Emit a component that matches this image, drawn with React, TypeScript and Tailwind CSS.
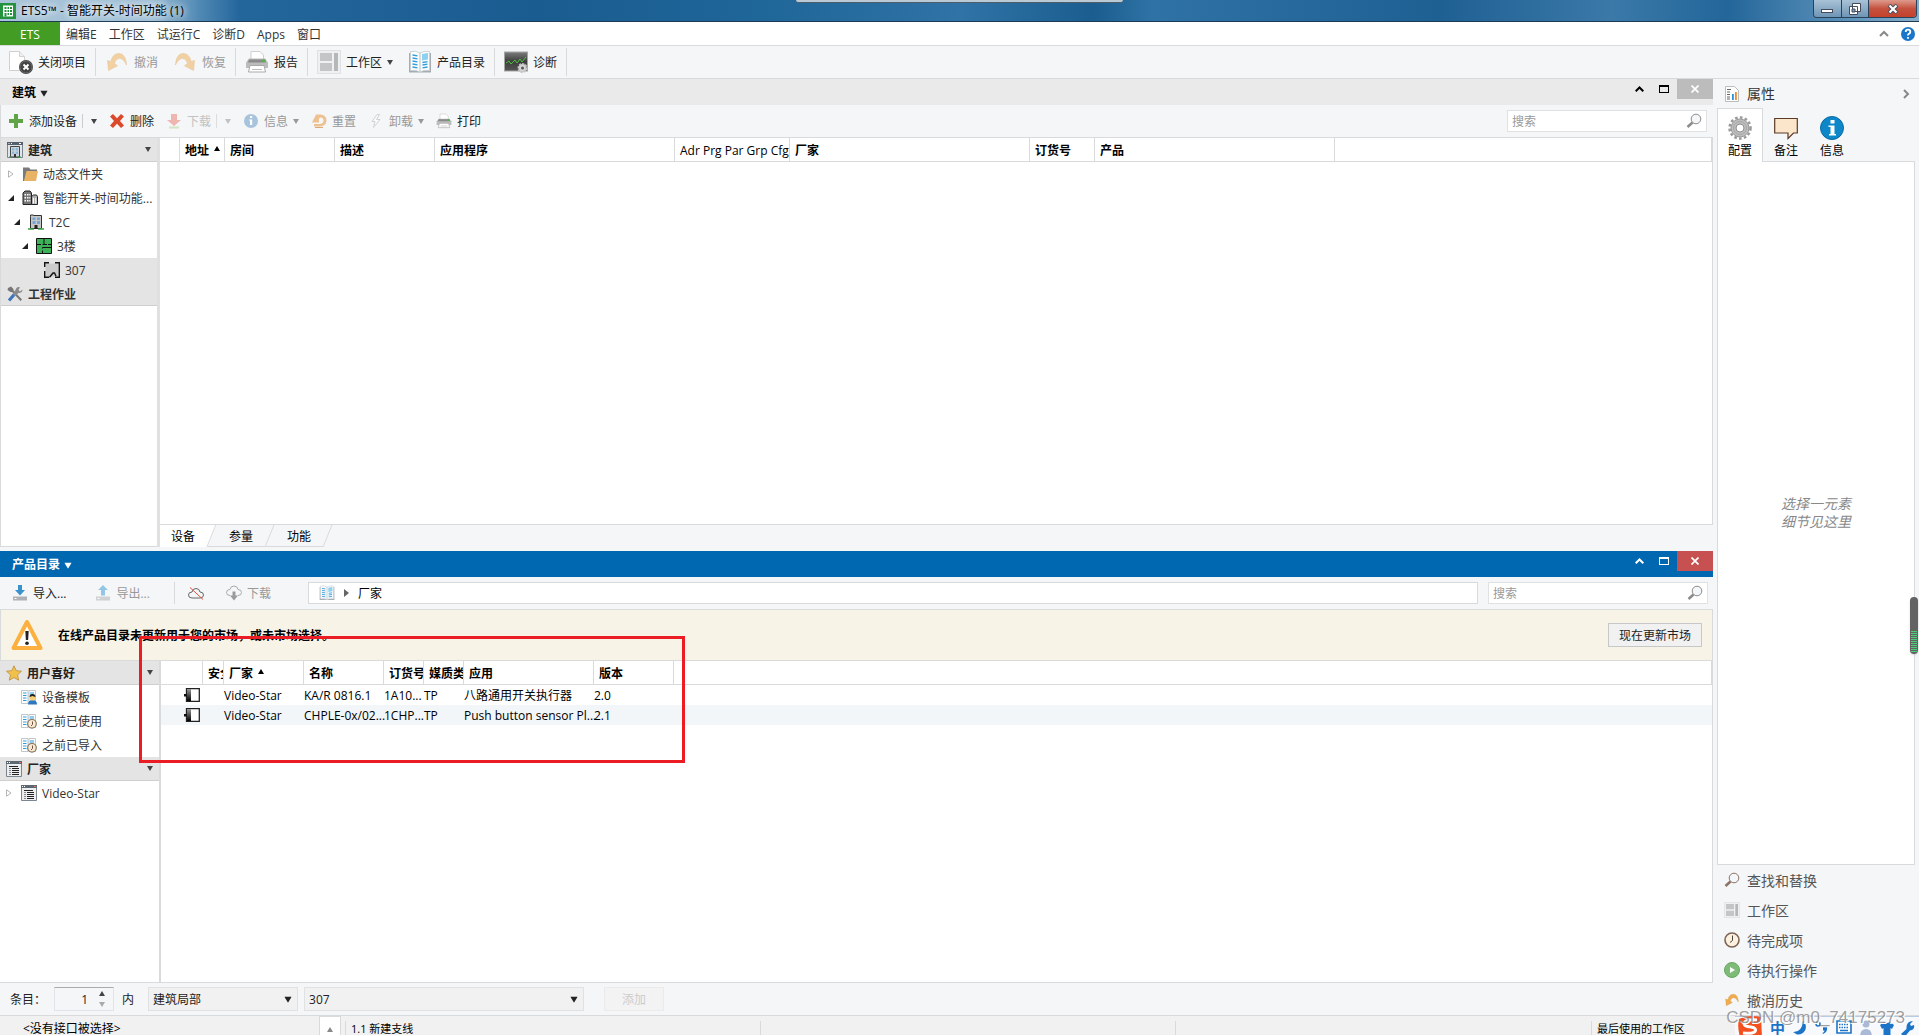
import type { ReactNode } from "react";

const font = "font-['Open_Sans','Noto_Sans_CJK_SC',sans-serif]";

/* ---------- small shared glyphs ---------- */

function Down({ className = "text-[#444]" }: { className?: string }) {
  return (
    <svg className={`h-[5px] w-[6px] shrink-0 ${className}`} viewBox="0 0 6 5" fill="currentColor">
      <path d="M0 0h6L3 5z" />
    </svg>
  );
}

function Up({ className = "text-[#444]" }: { className?: string }) {
  return (
    <svg className={`h-[5px] w-[6px] shrink-0 ${className}`} viewBox="0 0 6 5" fill="currentColor">
      <path d="M0 5h6L3 0z" />
    </svg>
  );
}

function Expander({ open }: { open?: boolean }) {
  return open ? (
    <svg className="h-[6px] w-[6px]" viewBox="0 0 6 6">
      <path d="M6 0v6H0z" fill="#222" />
    </svg>
  ) : (
    <svg className="h-[8px] w-[6px]" viewBox="0 0 6 8">
      <path d="M.5.8v6.4L5 4z" fill="#fff" stroke="#b5b5b5" />
    </svg>
  );
}

/* ---------- main toolbar icons (24px) ---------- */

function CloseProjectIcon() {
  return (
    <svg width="24" height="24" viewBox="0 0 24 24">
      <path d="M.5 1.500h10l5 5v14H.5z" fill="#fff" stroke="#d0d0d0" />
      <path d="M10.500 1.500v5h5" fill="#eee" stroke="#d0d0d0" />
      <circle cx="17" cy="17" r="7" fill="#444" />
      <circle cx="17" cy="17" r="6" fill="none" stroke="#6a6a6a" />
      <path d="M14.500 14.500l5 5M19.500 14.500l-5 5" stroke="#fff" strokeWidth="2" />
    </svg>
  );
}

function ArrowBack({ size = 24, flip, faded }: { size?: number; flip?: boolean; faded?: boolean }) {
  return (
    <svg
      width={size}
      height={size}
      viewBox="0 0 24 24"
      className={`${flip ? "-scale-x-100" : ""} ${faded ? "opacity-50" : ""}`}
    >
      <path
        d="M21.500 15C21 8 18.500 3.500 14 3.500C9.500 3.500 6.800 7 6 11.500L2.500 10.500L3.500 20.500L12.500 15.800L9.500 13.500C10.200 10.500 12 8.500 14.500 8.500C17.500 8.500 19.500 11 21.500 15Z"
        fill="#f0ab4e"
        stroke="#dc9a44"
        strokeWidth=".6"
      />
    </svg>
  );
}

function PrinterIcon({ size = 24 }: { size?: number }) {
  return (
    <svg width={size} height={size} viewBox="0 0 24 24">
      <path d="M6 10V1.500h9l3.500 3.500v5z" fill="#fff" stroke="#cfcfcf" />
      <path d="M4 8.500h16l3 4v5.500H1v-5.500z" fill="#bcbcbc" />
      <path d="M4 9.500h16l1 3H3z" fill="#8a8a8a" />
      <rect x="17.500" y="9.500" width="3" height="2.500" fill="#4fb848" />
      <path d="M5 15.500h14l1.500 6.500h-17z" fill="#fff" stroke="#a9a9a9" />
      <path d="M7 19.500h10" stroke="#bbb" />
    </svg>
  );
}

function WorkspaceIcon({ size = 24 }: { size?: number }) {
  return (
    <svg width={size} height={size} viewBox="0 0 24 24">
      <rect x=".5" y=".5" width="23" height="23" fill="#eff0f1" stroke="#e0e1e2" />
      <path d="M3 3h12v8H3zM3 13h12v8H3z" fill="#c3c5c6" />
      <path d="M17 3h4v18h-4z" fill="#b5b7b8" />
    </svg>
  );
}

function BookIcon({ size = 24 }: { size?: number }) {
  return (
    <svg width={size} height={size} viewBox="0 0 24 24">
      <path d="M1 22.500V3h1.500v17.500h19V3H23v19.500z" fill="#a5adb2" />
      <path d="M2.500 1.500Q8 .5 12 3Q16 .5 21.500 1.500V20.500Q16 19.500 12 22Q8 19.500 2.500 20.500z" fill="#fbfcfd" stroke="#c2c9cd" strokeWidth=".8" />
      <path d="M12 3v18.500" stroke="#b5bdc2" />
      <path d="M4.500 5l5 .8M4.500 8l5 .8M4.500 11l5 .8M4.500 14l5 .8M4.500 17l5 .8M14.500 12.500l5-.8M14.500 15l5-.8M14.500 17.800l5-.8" stroke="#2f9ed8" strokeWidth="1.300" />
      <path d="M14 4l6-1v6.500l-6 1z" fill="#8ed0f0" />
    </svg>
  );
}

function DiagnosticsIcon() {
  return (
    <svg width="24" height="24" viewBox="0 0 24 24">
      <defs>
        <linearGradient id="screen" x1="0" y1="0" x2="0" y2="1">
          <stop offset="0" stopColor="#7c7c7c" />
          <stop offset=".5" stopColor="#3d3d3d" />
          <stop offset="1" stopColor="#555" />
        </linearGradient>
      </defs>
      <rect x=".5" y="2" width="23" height="19" fill="url(#screen)" stroke="#a5a5a5" />
      <path d="M2 13l3-2 2 3 4-4 2 3 3-4 2 3 4-5" fill="none" stroke="#4cc23c" />
      <circle cx="18.500" cy="18" r="4" fill="#d6d6d6" stroke="#c2c2c2" strokeDasharray="2 1" strokeWidth="2" />
      <circle cx="18.500" cy="18" r="1.500" fill="#555" />
    </svg>
  );
}

/* ---------- 16px icons ---------- */

function Icon({ children, size = 16 }: { children: ReactNode; size?: number }) {
  return (
    <svg className="shrink-0" width={size} height={size} viewBox="0 0 16 16">
      {children}
    </svg>
  );
}

const PlusIcon = () => (
  <Icon>
    <path d="M6 1h4v5h5v4h-5v5H6v-5H1V6h5z" fill="#5fa548" />
  </Icon>
);

const DeleteIcon = () => (
  <Icon>
    <path d="M4 1l4 4.300L12 1l3 2.500L11 8l4 4.500-3 2.500-4-4.300L4 15l-3-2.500L5 8 1 3.500z" fill="#db4a2b" />
  </Icon>
);

const DownloadRedIcon = () => (
  <Icon>
    <path d="M5 1h6v6h4l-7 6-7-6h4z" fill="#efb6b0" />
    <path d="M3 13.500h10v2H3z" fill="#d2e5c4" />
  </Icon>
);

const InfoIcon = () => (
  <Icon>
    <circle cx="8" cy="8" r="7" fill="#a8c4dd" />
    <path d="M7 3h2.200v2H7zM6 6.500h3.200V12H7V7.500H6z" fill="#fff" />
  </Icon>
);

const ResetIcon = () => (
  <Icon>
    <path d="M5 1.500h5q5.500 1 5.500 6T9.500 13.500H3V11h6q3.500-.5 3.500-3.500T9.500 4.500L8 5.500v4H1z" fill="#eec193" />
    <path d="M4 14.500h8" stroke="#dba979" />
  </Icon>
);

const BoltIcon = () => (
  <Icon>
    <path d="M9 1.500L4 8.500h3L5.500 14.500 12 6.500H8.500L11.500 1.500z" fill="#fafafa" stroke="#d2d2d2" />
  </Icon>
);

const MagnifierIcon = ({ stroke = "#8b8b8b" }: { stroke?: string }) => (
  <Icon>
    <circle cx="10" cy="6" r="4.800" fill="#f4f7f9" stroke={stroke} />
    <path d="M6.500 9.500L1.500 14" stroke={stroke} strokeWidth="2.500" />
  </Icon>
);

const BuildingsPaneIcon = () => (
  <Icon>
    <path d="M.5.500h15v15H.5z" fill="#dfe5ea" stroke="#7b8691" />
    <path d="M0 0h16v3H0z" fill="#55606c" />
    <path d="M1.500 1.500h1M4 1.500h1M12 1.500h2" stroke="#fff" />
    <path d="M3.500 4.500h9v10.500h-9z" fill="#cdd6dd" stroke="#444" />
    <path d="M5 6h2.300v2.500H5zM8.700 6H11v2.500H8.700zM5 9.500h2.300V12H5zM8.700 9.500H11V12H8.700z" fill="#8fb7da" />
    <path d="M7 12h2v3H7z" fill="#333" />
    <path d="M2 15h3M11 15h3" stroke="#3ba244" />
  </Icon>
);

const FolderIcon = () => (
  <Icon>
    <path d="M1 15V1.500h6l1.500 2H15V6H5L2.500 15z" fill="#7a7a7a" />
    <path d="M4.500 5H16l-2 10H2z" fill="#e8b364" />
  </Icon>
);

const ProjectIcon = () => (
  <Icon>
    <path d="M1 3l2-2h5l1.500 2v11.500H1z" fill="#777" stroke="#222" />
    <path d="M9.500 6.500l2-1.500h3l1 1.500v8h-6z" fill="#b0b0b0" stroke="#222" />
    <path d="M2.500 4h1.500v1.500H2.500zM5 4h1.500v1.500H5zM7.300 4h1v1.500h-1zM2.500 7h1.500v1.500H2.500zM5 7h1.500v1.500H5zM7.300 7h1v1.500h-1zM2.500 10h1.500v1.500H2.500zM5 10h1.500v1.500H5zM7.300 10h1v1.500h-1zM11 8h1v5.500h-1zM13.300 8h1v5.500h-1z" fill="#fff" />
  </Icon>
);

const BuildingIcon = () => (
  <Icon>
    <path d="M2.500 2.500V1h3v.5h8v13h-11z" fill="#c7c7c7" stroke="#333" />
    <path d="M4.500 3.500h3v2.500h-3zM9 3.500h3v2.500H9zM4.500 7h3v3h-3zM9 7h3v3H9z" fill="#78a6d2" />
    <path d="M6.500 11h3v4h-3z" fill="#222" />
    <path d="M0 15h6M10 15h6" stroke="#3ba244" strokeWidth="1.500" />
  </Icon>
);

const FloorIcon = () => (
  <Icon>
    <path d="M.5.500h15v15H.5z" fill="#3cb158" stroke="#111" />
    <path d="M8 1v5M1 6.500h4M6.500 6.500H11M12 6.500h3M6.500 15.500v-3M6.500 10.500V9.500h9" fill="none" stroke="#111" />
  </Icon>
);

const RoomIcon = () => (
  <Icon>
    <path d="M1.500 1.500h13v13H1.500z" fill="#cbcbcb" />
    <path d="M.7 5V.7H5M11 .7h4.300V15.300H11M5 15.300H.7V9M5.500 15.300L9 11l1.500 0 1.500 3" fill="none" stroke="#111" strokeWidth="1.400" />
  </Icon>
);

const ToolsIcon = () => (
  <Icon>
    <path d="M1 2l3-1.500 2.500 2.500v1.500l8.500 9-1.500 1.500-8.500-9H3.500L.5 4z" fill="#777" />
    <path d="M15.500 3.500l-2.500 2-1.500-1.500L13 1.200q-3.500-1-4.500 2.800L6 7l2.500 2.500 3-2.500q4 0 4-3.500z" fill="#8b8b8b" />
    <path d="M6 7.500l2.200 2.200-5 5.800L.8 13.500z" fill="#3e76b7" />
  </Icon>
);

const StarIcon = () => (
  <Icon>
    <path d="M8 .8l2.200 4.900 5.300.5-4 3.600 1.200 5.400L8 12.500l-4.700 2.700 1.200-5.400-4-3.600 5.300-.5z" fill="#f2c14a" stroke="#c59a4b" />
  </Icon>
);

function CatalogEntryIcon({ person }: { person?: boolean }) {
  return (
    <Icon>
      <path d="M.5 1.500h6.500v13H.5zM8 1.500h6.500v13H8z" fill="#fff" stroke="#bfc7cc" />
      <path d="M2 4h3.500M2 6.500h3.500M2 9h3.500M2 11.500h3.500" stroke="#2f9ed8" />
      <path d="M9 3h4v4H9z" fill="#90cdf0" />
      {person ? (
        <>
          <path d="M7 15.500q0-4.500 4.500-4.500t4.500 4.500z" fill="#2f77bd" />
          <circle cx="11.500" cy="8.800" r="2.800" fill="#f4cf72" />
          <path d="M8.500 8q0-3 3-3t3 3l-3-1z" fill="#222" />
        </>
      ) : (
        <>
          <circle cx="11" cy="10.800" r="4.300" fill="#f8ead4" stroke="#8f745c" strokeWidth="1.200" />
          <path d="M11.500 8.500v3l-1.500 1.500" fill="none" stroke="#6b5542" />
        </>
      )}
    </Icon>
  );
}

const ListPaneIcon = () => (
  <Icon>
    <path d="M.5.500h15v15H.5z" fill="#eceef0" stroke="#7b8691" />
    <path d="M0 0h16v3H0z" fill="#5d6873" />
    <path d="M1 1.500h1M3 1.500h1" stroke="#fff" />
    <path d="M13 1.500h2" stroke="#e66" />
    <path d="M3 5.500h9M6 7.500h7M6 9.500h7M6 11.500h7M6 13.500h7M3.500 7.500h1M3.500 9.500h1M3.500 11.500h1M3.500 13.500h1" stroke="#222" />
  </Icon>
);

const ImportIcon = () => (
  <Icon>
    <path d="M6 0h4v5h3L8 10.500 3 5h3z" fill="#3a92cc" />
    <path d="M1 11.500h14v4H1z" fill="#aeb2b5" />
    <path d="M2.500 13.500h2" stroke="#fff" />
  </Icon>
);

const ExportIcon = () => (
  <Icon>
    <path d="M6 10.500h4V5h3L8 0 3 5h3z" fill="#93c6e6" />
    <path d="M1 11.500h14v4H1z" fill="#cfd1d3" />
    <path d="M2.500 13.500h2" stroke="#fff" />
  </Icon>
);

const CloudOffIcon = () => (
  <Icon>
    <path d="M4 13q-3.500 0-3.500-3T4 7q.5-3.500 4-3.500T12 7q3.500 0 3.500 3T12 13z" fill="none" stroke="#666" />
    <path d="M2 2.500l13 12" stroke="#e4523f" />
  </Icon>
);

const CloudDownloadIcon = () => (
  <Icon>
    <path d="M4 10.500Q.5 10.500.5 7.500T4 4.500Q4.500 1 8 1t4 3.500q3.500 0 3.500 3T12 10.500" fill="none" stroke="#aaa" />
    <path d="M6.500 6.500h3v4H12l-4 5-4-5h2.500z" fill="#9b9b9b" />
  </Icon>
);

const DeviceIcon = () => (
  <svg width="16" height="14" viewBox="0 0 16 14">
    <defs>
      <linearGradient id="dev" x1="0" y1="0" x2="0" y2="1">
        <stop offset="0" stopColor="#999" />
        <stop offset="1" stopColor="#000" />
      </linearGradient>
    </defs>
    <path d="M2.500.700h12.800v12.600H2.500z" fill="#fff" stroke="#222" strokeWidth="1.300" />
    <path d="M3 1h4v12H3z" fill="url(#dev)" />
    <path d="M0 6h3v2.500H0z" fill="#111" />
  </svg>
);

/* ---------- building blocks ---------- */

function ToolButton({ icon, label, disabled, tone = "text-[#999]" }: { icon: ReactNode; label: string; disabled?: boolean; tone?: string }) {
  return (
    <button type="button" disabled={disabled} className={`flex items-center gap-[5px] whitespace-nowrap ${disabled ? tone : "text-[#222]"}`}>
      {icon}
      <span className="pt-[2px]">{label}</span>
    </button>
  );
}

function PaneTitle({ title, active }: { title: string; active?: boolean }) {
  return (
    <div className={`flex h-[26px] shrink-0 items-start ${active ? "bg-[#0068b0] text-white" : "bg-[#eaeaea] text-black"}`}>
      <button type="button" className="ml-3 flex h-[26px] flex-1 items-center gap-[5px] pt-[2px] font-bold">
        {title}
        <Down className={active ? "scale-125 text-white" : "scale-125 text-[#222]"} />
      </button>
      <button type="button" aria-label="折叠" className="flex h-5 w-6 items-center justify-center">
        <svg width="9" height="6" viewBox="0 0 9 6" fill="none" stroke="currentColor" strokeWidth="2">
          <path d="M.7 5.300L4.500 1.500l3.800 3.800" />
        </svg>
      </button>
      <button type="button" aria-label="最大化" className="flex h-5 w-[26px] items-center justify-center">
        <span className="h-2 w-[10px] border border-t-2 border-current" />
      </button>
      <button
        type="button"
        aria-label="关闭"
        className={`flex h-5 w-9 items-center justify-center text-white ${active ? "bg-[#c75050]" : "bg-[#bcbcbc]"}`}
      >
        <svg width="8" height="8" viewBox="0 0 8 8" stroke="currentColor" strokeWidth="1.700">
          <path d="M.5.500l7 7M7.500.500l-7 7" />
        </svg>
      </button>
    </div>
  );
}

function SearchBox({ className, name }: { className: string; name: string }) {
  return (
    <label className={`flex h-[22px] items-center border border-[#dfe1e3] bg-white pr-1 pl-1 ${className}`}>
      <input name={name} placeholder="搜索" className="min-w-0 flex-1 bg-transparent pt-[2px] outline-none placeholder:text-[#999]" />
      <MagnifierIcon />
    </label>
  );
}

function SideHeader({ icon, label }: { icon: ReactNode; label: string }) {
  return (
    <button type="button" className="flex h-6 w-full items-center gap-[5px] border-b border-[#cfcfcf] bg-[#e4e4e4] px-[6px] font-bold text-[#222]">
      {icon}
      <span className="flex-1 pt-[2px] text-left">{label}</span>
      <Down />
    </button>
  );
}

const tree = [
  { label: "动态文件夹", icon: <FolderIcon />, indent: "pl-[7px]", open: false },
  { label: "智能开关-时间功能...", icon: <ProjectIcon />, indent: "pl-[7px]", open: true },
  { label: "T2C", icon: <BuildingIcon />, indent: "pl-[13px]", open: true },
  { label: "3楼", icon: <FloorIcon />, indent: "pl-[21px]", open: true },
  { label: "307", icon: <RoomIcon />, indent: "pl-[29px]", open: null },
];

const deviceColumns = [
  { label: "", width: "w-[20px]" },
  { label: "地址", width: "w-[45px]", sorted: true },
  { label: "房间", width: "w-[110px]" },
  { label: "描述", width: "w-[100px]" },
  { label: "应用程序", width: "w-[240px]" },
  { label: "Adr Prg Par Grp Cfg", width: "w-[115px]", light: true },
  { label: "厂家", width: "w-[240px]" },
  { label: "订货号", width: "w-[65px]" },
  { label: "产品", width: "w-[240px]" },
  { label: "", width: "" },
];

const catalogColumns = [
  { label: "", width: "w-[42px]" },
  { label: "安全", width: "w-[21px]" },
  { label: "厂家", width: "w-[80px]", sorted: true },
  { label: "名称", width: "w-[80px]" },
  { label: "订货号", width: "w-[40px]" },
  { label: "媒质类型", width: "w-[40px]" },
  { label: "应用", width: "w-[130px]" },
  { label: "版本", width: "w-[80px]" },
  { label: "", width: "" },
];

const products = [
  ["Video-Star", "KA/R 0816.1", "1A10...", "TP", "八路通用开关执行器", "2.0"],
  ["Video-Star", "CHPLE-0x/02...", "1CHP...", "TP", "Push button sensor Pl...", "2.1"],
];

type Column = { label: string; width: string; sorted?: boolean; light?: boolean };

function TableHead({ columns }: { columns: Column[] }) {
  return (
    <thead>
      <tr>
        {columns.map((c, i) => (
          <th
            key={i}
            scope="col"
            className={`h-6 overflow-hidden border-r border-b border-[#d9dadc] pt-[2px] pr-0 pb-0 pl-[5px] text-left whitespace-nowrap ${c.width} ${c.light ? "font-normal" : "font-bold"}`}
          >
            {c.label}
            {c.sorted && <Up className="mb-[6px] ml-[5px] inline-block align-middle" />}
          </th>
        ))}
      </tr>
    </thead>
  );
}

/* ---------- window chrome ---------- */

function TitleBar() {
  return (
    <header className="relative flex h-[22px] shrink-0 items-start justify-between border-b border-[#1d3a55] bg-[linear-gradient(90deg,#a9c4d8_0,#9fbfd6_150px,#4f88b4_200px,#23669c_240px,#1a5c90_28%,#1f6699_40%,#3073a6_50%,#1a5d8e_57%,#2f72a5_60%,#1f6093_75%,#3a79a8_84%,#23669a_90%,#5a8fb8_96%,#86aecb_100%)]">
      <div className="flex h-[21px] items-center gap-[5px]">
        <Icon>
          <path d="M0 0h16v16H0z" fill="#23923d" />
          <path d="M3 2.500h10v11H3z" fill="#fff" />
          <path d="M4.500 4h2v2h-2zM7.500 4h1.500v2H7.500zM10 4h2v2h-2zM4.500 7h2v2h-2zM7.500 7h1.500v2H7.500zM10 7h2v2h-2zM4.500 10h2v3.500h-2zM7.500 10h1.500v2H7.500zM10 10h2v2h-2z" fill="#23923d" />
        </Icon>
        <h1 className="pt-px text-[12px] text-black [text-shadow:0_0_6px_#fff,0_0_8px_#fff]">ETS5™ - 智能开关-时间功能 (1)</h1>
      </div>
      {/* docked session bar, hangs over the title */}
      <div className="absolute top-0 left-[41.5%] h-[3px] w-[17%] rounded-b border-b border-[#4d5d69] bg-[#b9c9d5]" />
      <div className="mr-[2px] flex h-[18px] w-[104px] overflow-hidden rounded-b border border-t-0 border-[#27425b]">
        <button type="button" aria-label="最小化" className="flex flex-1 items-center justify-center border-r border-[#27425b] bg-linear-to-b from-[#a9c2d6] to-[#6f95b5]">
          <span className="mt-1 h-1 w-3 border border-[#444b5c] bg-white" />
        </button>
        <button type="button" aria-label="还原" className="flex flex-1 items-center justify-center border-r border-[#27425b] bg-linear-to-b from-[#a9c2d6] to-[#6f95b5]">
          <svg width="12" height="12" viewBox="0 0 12 12" fill="#fff" stroke="#444b5c">
            <path d="M3.500.500h8v8h-8zM.5 3.500h8v8h-8z" />
            <path d="M3 6h3v3H3z" fill="#7b9cb8" />
          </svg>
        </button>
        <button type="button" aria-label="关闭窗口" className="flex w-[47px] items-center justify-center bg-linear-to-b from-[#dc9a8d] via-[#c5513f] to-[#c4402a]">
          <svg width="12" height="10" viewBox="0 0 12 10">
            <path d="M2 1l8 8M10 1L2 9" stroke="#444b5c" strokeWidth="4" />
            <path d="M2.500 1.500l7 7M9.500 1.500l-7 7" stroke="#fff" strokeWidth="2.200" />
          </svg>
        </button>
      </div>
    </header>
  );
}

function MenuBar() {
  return (
    <nav className="flex h-6 shrink-0 items-center border-b border-[#d9dadc] bg-white text-[#333]">
      <button type="button" className="h-full w-[60px] bg-[#439c24] pt-[2px] text-white">ETS</button>
      <div className="flex flex-1 gap-3 pt-[2px] pl-[6px]">
        {["编辑E", "工作区", "试运行C", "诊断D", "Apps", "窗口"].map((m) => (
          <button key={m} type="button">{m}</button>
        ))}
      </div>
      <button type="button" aria-label="收起功能区" className="mr-[11px]">
        <svg width="10" height="7" viewBox="0 0 10 7" fill="none" stroke="#888" strokeWidth="2">
          <path d="M1 6l4-4 4 4" />
        </svg>
      </button>
      <button type="button" aria-label="帮助" className="mr-[3px]">
        <Icon>
          <circle cx="8" cy="8" r="7" fill="#1976c9" />
          <path d="M5.700 6q0-2.300 2.300-2.300T10.300 6Q10.300 7 9 7.800T8 9.500M8 11v1.800" fill="none" stroke="#fff" strokeWidth="1.800" />
        </Icon>
      </button>
    </nav>
  );
}

function Ribbon() {
  const group = "flex h-7 items-center gap-[15px] border-r border-[#d9dadc] px-[9px]";
  return (
    <div className="flex h-[33px] shrink-0 items-center border-b border-[#d9dadc]">
      <div className={group}>
        <ToolButton icon={<CloseProjectIcon />} label="关闭项目" />
      </div>
      <div className={group}>
        <ToolButton icon={<ArrowBack faded />} label="撤消" disabled />
        <ToolButton icon={<ArrowBack faded flip />} label="恢复" disabled />
      </div>
      <div className={group}>
        <ToolButton icon={<PrinterIcon />} label="报告" />
      </div>
      <div className={group}>
        <div className="flex items-center gap-[5px]">
          <ToolButton icon={<WorkspaceIcon />} label="工作区" />
          <Down />
        </div>
        <ToolButton icon={<BookIcon />} label="产品目录" />
      </div>
      <div className={group}>
        <ToolButton icon={<DiagnosticsIcon />} label="诊断" />
      </div>
    </div>
  );
}

/* ---------- buildings pane ---------- */

function BuildingsPane() {
  return (
    <section className="flex min-h-0 flex-col">
      <PaneTitle title="建筑" />
      <div className="flex h-8 shrink-0 items-center gap-3 border-l border-[#d9dadc] pr-[6px] pl-[7px]">
        <div className="flex items-center gap-[5px]">
          <ToolButton icon={<PlusIcon />} label="添加设备" />
          <span className="mr-[3px] h-[14px] w-px bg-[#ccc]" />
          <Down />
        </div>
        <ToolButton icon={<DeleteIcon />} label="删除" />
        <div className="flex items-center gap-[5px]">
          <ToolButton icon={<DownloadRedIcon />} label="下载" disabled tone="text-[#c2c2c2]" />
          <span className="mr-[3px] h-[14px] w-px bg-[#ddd]" />
          <Down className="text-[#c2c2c2]" />
        </div>
        <div className="flex items-center gap-[5px]">
          <ToolButton icon={<InfoIcon />} label="信息" disabled />
          <Down className="text-[#999]" />
        </div>
        <ToolButton icon={<ResetIcon />} label="重置" disabled />
        <div className="flex items-center gap-[5px]">
          <ToolButton icon={<BoltIcon />} label="卸载" disabled />
          <Down className="text-[#999]" />
        </div>
        <ToolButton icon={<PrinterIcon size={16} />} label="打印" />
        <SearchBox name="device-search" className="ml-auto w-[200px]" />
      </div>

      <div className="flex min-h-0 flex-1 border-t border-[#d9dadc]">
        <aside className="w-[157px] shrink-0 border-b border-l border-[#d9dadc] bg-white text-[#333]">
          <SideHeader icon={<BuildingsPaneIcon />} label="建筑" />
          <ul>
            {tree.map((n) => (
              <li key={n.label} className={`flex h-6 items-center whitespace-nowrap ${n.indent} ${n.open === null ? "bg-[#e4e4e4]" : ""}`}>
                <span className="mr-2 flex w-[6px] justify-center">{n.open !== null && <Expander open={n.open} />}</span>
                {n.icon}
                <span className="ml-[5px] pt-[2px]">{n.label}</span>
              </li>
            ))}
          </ul>
          <button type="button" className="flex h-6 w-full items-center gap-[5px] border-b border-[#cfcfcf] bg-[#e4e4e4] px-[6px] font-bold">
            <ToolsIcon />
            <span className="pt-[2px]">工程作业</span>
          </button>
        </aside>
        <div className="w-[3px] shrink-0 bg-[#dfe0e2]" />
        <div className="flex min-w-0 flex-1 flex-col">
          <div className="flex-1 border-r border-[#d9dadc] bg-white">
            <table className="w-full table-fixed border-separate border-spacing-0 text-black">
              <TableHead columns={deviceColumns} />
            </table>
          </div>
          <div role="tablist" className="flex h-[23px] overflow-hidden border-t border-[#d9dadc] text-black">
            <button type="button" role="tab" aria-selected="true" className="relative -mt-px h-[23px] w-[52px] pt-[2px]">
              <span className="absolute inset-y-0 right-0 -left-6 -skew-x-[22deg] border-r border-[#d9dadc] bg-white" />
              <span className="relative mr-[6px]">设备</span>
            </button>
            {["参量", "功能"].map((t) => (
              <button key={t} type="button" role="tab" aria-selected="false" className="relative h-[22px] w-[58px] pt-px">
                <span className="absolute inset-0 -skew-x-[22deg] border-r border-b border-[#d9dadc]" />
                <span className="relative">{t}</span>
              </button>
            ))}
          </div>
        </div>
      </div>
    </section>
  );
}

/* ---------- catalogue pane ---------- */

function CatalogPane() {
  return (
    <section className="flex min-h-0 flex-col">
      <PaneTitle title="产品目录" active />
      <div className="flex h-8 shrink-0 items-center pr-[5px] pl-3">
        <ToolButton icon={<ImportIcon />} label="导入..." />
        <div className="ml-[29px]">
          <ToolButton icon={<ExportIcon />} label="导出..." disabled />
        </div>
        <span className="ml-6 h-[22px] w-px bg-[#d9dadc]" />
        <button type="button" aria-label="离线" className="ml-[13px]">
          <CloudOffIcon />
        </button>
        <div className="ml-[22px]">
          <ToolButton icon={<CloudDownloadIcon />} label="下载" disabled />
        </div>
        <div className="ml-[37px] flex h-[22px] flex-1 items-center gap-[9px] border border-[#d9dadc] bg-white pl-[10px] text-black">
          <BookIcon size={16} />
          <svg width="5" height="8" viewBox="0 0 5 8">
            <path d="M0 0v8l5-4z" fill="#666" />
          </svg>
          <span className="pt-[2px]">厂家</span>
        </div>
        <SearchBox name="catalog-search" className="ml-[10px] w-[220px]" />
      </div>

      <div role="alert" className="flex h-[52px] shrink-0 items-center border border-[#d9dadc] bg-[#f7f3e6] pr-[10px] pl-[10px]">
        <svg width="32" height="32" viewBox="0 0 32 32">
          <path d="M16 3L29.500 29h-27z" fill="#fff" stroke="#fcb040" strokeWidth="4" strokeLinejoin="round" />
          <path d="M14.300 12h3.400l-.6 9h-2.200z" fill="#222" />
          <circle cx="16" cy="24.300" r="1.800" fill="#222" />
        </svg>
        <strong className="ml-[15px] flex-1 pt-[2px] text-black">在线产品目录未更新用于您的市场，或未市场选择。</strong>
        <button type="button" className="h-6 w-[94px] border border-[#c6c7c9] bg-[#f1f1f2] pt-px text-[#222]">现在更新市场</button>
      </div>

      <div className="flex min-h-0 flex-1 bg-white">
        <aside className="w-[159px] shrink-0 text-[#333]">
          <SideHeader icon={<StarIcon />} label="用户喜好" />
          <ul>
            {["设备模板", "之前已使用", "之前已导入"].map((t, i) => (
              <li key={t} className="flex h-6 items-center gap-[5px] pl-[21px]">
                <CatalogEntryIcon person={i === 0} />
                <span className="pt-[2px]">{t}</span>
              </li>
            ))}
          </ul>
          <SideHeader icon={<ListPaneIcon />} label="厂家" />
          <div className="flex h-6 items-center gap-[5px] pl-[6px]">
            <span className="mr-1">
              <Expander />
            </span>
            <ListPaneIcon />
            <span className="pt-[2px]">Video-Star</span>
          </div>
        </aside>
        <div className="w-[2px] shrink-0 bg-[#d9dadc]" />
        <div className="min-w-0 flex-1 border-r border-[#d9dadc]">
          <table className="w-full table-fixed border-separate border-spacing-0 text-black">
            <TableHead columns={catalogColumns} />
            <tbody>
              {products.map((row) => (
                <tr key={row[1]} className="h-5 even:bg-[#f3f6f9]">
                  <td className="p-0 pl-[23px]">
                    <DeviceIcon />
                  </td>
                  <td className="p-0" />
                  {row.map((cell, i) => (
                    <td key={i} className="p-0 pt-[2px] whitespace-nowrap">
                      {cell}
                    </td>
                  ))}
                  <td className="p-0" />
                </tr>
              ))}
            </tbody>
          </table>
        </div>
      </div>

      <form className="flex h-[33px] shrink-0 items-center border-t border-[#d9dadc] pl-[10px] text-[#222]">
        <label htmlFor="count" className="w-11 pt-[2px]">条目：</label>
        <div className="flex h-6 w-[60px] items-center border border-[#dfe3ea] border-t-[#aaa] pr-2">
          <input id="count" defaultValue="1" className="w-0 flex-1 bg-transparent pt-px pr-[11px] text-right outline-none" />
          <span className="flex flex-col gap-[6px]">
            <Up />
            <Down className="text-[#aaa]" />
          </span>
        </div>
        <span className="ml-2 pt-[2px]">内</span>
        <div className="relative ml-[14px]">
          <select aria-label="建筑局部" className="block h-6 w-[150px] appearance-none border border-[#e0e1e3] bg-[#f1f1f2] pt-px pl-[4px]">
            <option>建筑局部</option>
          </select>
          <Down className="pointer-events-none absolute top-[10px] right-[7px] scale-125" />
        </div>
        <div className="relative ml-[6px]">
          <select aria-label="位置" className="block h-6 w-[280px] appearance-none border border-[#e0e1e3] bg-[#f1f1f2] pt-px pl-[4px]">
            <option>307</option>
          </select>
          <Down className="pointer-events-none absolute top-[10px] right-[7px] scale-125" />
        </div>
        <button type="button" disabled className="ml-5 h-6 w-[60px] border border-[#ebebeb] bg-[#f3f3f4] pt-px text-[#ccc]">添加</button>
      </form>
    </section>
  );
}

/* ---------- right column ---------- */

function GearIcon() {
  return (
    <svg width="24" height="24" viewBox="0 0 24 24">
      <circle cx="12" cy="12" r="10.500" fill="none" stroke="#9a9a9a" strokeWidth="2.500" strokeDasharray="2.700 2.200" />
      <circle cx="12" cy="12" r="9" fill="#bdbdbd" stroke="#999" />
      <circle cx="12" cy="12" r="6.500" fill="none" stroke="#a9a9a9" />
      <circle cx="12" cy="12" r="4" fill="#fff" stroke="#8f8f8f" />
    </svg>
  );
}

const propertyTabs = [
  { label: "配置", icon: <GearIcon /> },
  {
    label: "备注",
    icon: (
      <svg width="24" height="24" viewBox="0 0 24 24">
        <path d="M.7 2.500h22.600v14.500h-3.800L14 22.500V17H.7z" fill="#fce6cb" stroke="#5b3a26" strokeWidth="1.200" />
      </svg>
    ),
  },
  {
    label: "信息",
    icon: (
      <svg width="24" height="24" viewBox="0 0 24 24">
        <circle cx="12" cy="12" r="11.500" fill="#0d87c8" stroke="#0a6ca3" />
        <path d="M10.500 4h4v3.500h-4zM8.500 9.500h6V18h1.500v1.500H9V18h1.500v-7h-2z" fill="#fff" />
      </svg>
    ),
  },
];

const sideLinks = [
  { label: "查找和替换", icon: <MagnifierIcon stroke="#8c7366" /> },
  { label: "工作区", icon: <WorkspaceIcon size={16} /> },
  {
    label: "待完成项",
    icon: (
      <Icon>
        <circle cx="8" cy="8" r="7" fill="#fdf1de" stroke="#7c6556" strokeWidth="1.600" />
        <path d="M8.500 3.500V8.500L6 10.500" fill="none" stroke="#444" />
      </Icon>
    ),
  },
  {
    label: "待执行操作",
    icon: (
      <Icon>
        <circle cx="8" cy="8" r="7.500" fill="#7dbb77" stroke="#68a863" />
        <path d="M6 5v6l5-3z" fill="#fff" />
      </Icon>
    ),
  },
  { label: "撤消历史", icon: <ArrowBack size={16} /> },
];

function PropertiesPane() {
  return (
    <aside className="mr-1 ml-1 flex w-[198px] shrink-0 flex-col">
      <div className="flex h-[29px] shrink-0 items-center pr-1 pl-[7px] text-[14px] text-[#333]">
        <Icon>
          <path d="M1.500.500h9l4 4v11h-13z" fill="#fff" stroke="#bdbdbd" />
          <path d="M3 3.500h4M3 6h3M3 8.500h3M3 11h3M3 13h3" stroke="#666" />
          <path d="M8 8h1.800v6H8z" fill="#2f8fd0" />
          <path d="M11 6h1.800v8H11z" fill="#ef8a2c" />
        </Icon>
        <h2 className="ml-[7px] flex-1">属性</h2>
        <svg width="8" height="10" viewBox="0 0 8 10" fill="none" stroke="#888" strokeWidth="2">
          <path d="M1 1l4 4-4 4" />
        </svg>
      </div>
      <div role="tablist" className="flex h-[54px] shrink-0">
        {propertyTabs.map((t, i) => (
          <button
            key={t.label}
            type="button"
            role="tab"
            aria-selected={i === 0}
            className={`flex w-[46px] flex-col items-center pt-[7px] leading-[22px] text-black ${i === 0 ? "relative border border-b-0 border-[#d9dadc] bg-white" : "border-t border-transparent"}`}
          >
            {t.icon}
            {t.label}
          </button>
        ))}
      </div>
      <div className="-mt-px flex flex-1 items-center justify-center border border-[#d9dadc] bg-white text-center text-[14px] leading-[18px] text-[#888] italic">
        选择一元素
        <br />
        细节见这里
      </div>
      <ul className="shrink-0 text-[14px] text-[#555]">
        {sideLinks.map((l) => (
          <li key={l.label}>
            <a href="#" className="flex h-[30px] items-center gap-[7px] pl-[7px]">
              {l.icon}
              <span className="pt-[2px]">{l.label}</span>
            </a>
          </li>
        ))}
      </ul>
    </aside>
  );
}

function StatusBar() {
  return (
    <footer className="h-5 shrink-0 overflow-hidden border-t border-[#d9dadc] bg-[#f1f1f1] text-black">
      <div className="flex h-[26px] items-center">
        <span className="w-[319px] pl-[23px]">&lt;没有接口被选择&gt;</span>
        <button type="button" aria-label="展开" className="flex h-full w-[22px] items-center justify-center border border-[#d9dadc] bg-white">
          <Up className="text-[#888]" />
        </button>
        <span className="ml-1 w-[415px] border-l border-[#d9dadc] pl-[5px] text-[11px]">1.1 新建支线</span>
        <span className="h-4 w-[415px] border-l border-[#d9dadc]" />
        <span className="flex-1 border-l border-[#d9dadc]">&nbsp;</span>
        <span className="w-[328px] border-l border-[#d9dadc] pl-[5px] text-[11px]">最后使用的工作区</span>
      </div>
    </footer>
  );
}

function InputMethodBar() {
  return (
    <div className="absolute right-0 bottom-0 flex h-[19px] w-[184px] items-start gap-[7px] border-t border-[#b9cbe0] bg-[#f7f9fc] pt-[2px] pl-[2px]">
      <svg className="-mt-1 shrink-0" width="26" height="22" viewBox="0 0 26 22">
        <path d="M2 4Q12-1 24 2l1 20H3Q0 12 2 4z" fill="#f4511e" />
        <path d="M20 5Q8 4 7 8.500Q7 11.500 14 12Q20 13 18 16.500Q16 19 6 18" fill="none" stroke="#fff" strokeWidth="3" />
      </svg>
      <span className="text-[15px] leading-[18px] font-bold text-[#1c74c8]">中</span>
      <svg className="mt-px shrink-0" width="16" height="16" viewBox="0 0 16 16">
        <path d="M11 1q4 3 2.500 8.500Q11 15 5 14.500L1 12q9 .5 10-11z" fill="#1c74c8" />
      </svg>
      <svg className="mt-px shrink-0" width="14" height="16" viewBox="0 0 14 16">
        <circle cx="3" cy="4" r="2" fill="none" stroke="#1c74c8" strokeWidth="1.500" />
        <path d="M8 7h4q1 5-4 7l-.5-1q2-1 2-2.500H8z" fill="#1c74c8" />
      </svg>
      <svg className="mt-px shrink-0" width="16" height="14" viewBox="0 0 16 14">
        <path d="M1 1h14v12H1z" fill="#fff" stroke="#1c74c8" strokeWidth="1.600" />
        <path d="M3 4.500h10M3 7.500h10" stroke="#1c74c8" strokeWidth="1.500" strokeDasharray="1.500 1" />
        <path d="M4 10.500h8" stroke="#1c74c8" strokeWidth="1.500" />
      </svg>
      <svg className="shrink-0" width="14" height="18" viewBox="0 0 14 18">
        <circle cx="7" cy="5" r="3.500" fill="#aab9d6" />
        <path d="M1 18q0-8 6-8t6 8z" fill="#aab9d6" />
      </svg>
      <svg className="shrink-0" width="14" height="18" viewBox="0 0 14 18">
        <path d="M4 3q3 2 6 0l4 3-2 4-1.500-1v9h-7V9L2 10 0 6z" fill="#1c74c8" />
      </svg>
      <svg className="shrink-0" width="14" height="18" viewBox="0 0 14 18">
        <path d="M12 2L9 5l1 2 3-1q1 5-4 5.500L3.500 18 0 15l5.500-5Q5 2 12 2z" fill="#1c74c8" />
      </svg>
    </div>
  );
}

export default function App() {
  return (
    <div className={`relative flex h-screen flex-col overflow-hidden bg-[#f4f6f8] text-[12px] leading-[16px] ${font}`}>
      <TitleBar />
      <MenuBar />
      <Ribbon />
      <main className="flex min-h-0 flex-1">
        <div className="grid min-w-0 flex-1 grid-rows-[468fr_464fr] gap-1">
          <BuildingsPane />
          <CatalogPane />
        </div>
        <PropertiesPane />
      </main>
      <StatusBar />
      <InputMethodBar />

      {/* marker around the found products */}
      <div className="pointer-events-none absolute top-[636px] left-[139px] h-[127px] w-[546px] border-[3px] border-[#ec1c24]" />
      {/* floating meter at the screen edge */}
      <div className="absolute top-[597px] right-[1px] flex h-[57px] w-2 flex-col justify-end overflow-hidden rounded-full bg-[#636363] px-px pb-[2px] shadow">
        <div className="h-[22px] bg-[repeating-linear-gradient(0deg,#4bd07a_0,#4bd07a_1px,#636363_1px,#636363_2px)]" />
      </div>
      <span className="absolute right-[14px] bottom-[7px] font-['Liberation_Sans',sans-serif] text-[17px] leading-5 text-[#777]/70 [text-shadow:1px_1px_0_#fff]">
        CSDN @m0_74175273
      </span>
    </div>
  );
}
